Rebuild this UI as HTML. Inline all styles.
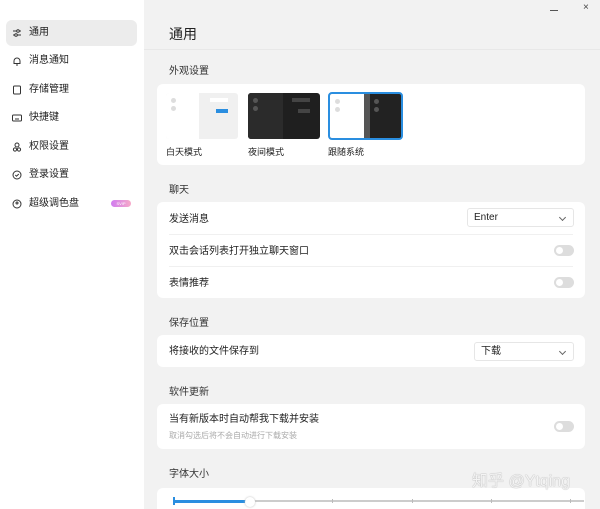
<!DOCTYPE html>
<html style="width:600px;height:509px;overflow:hidden"><head><meta charset="utf-8"><style>
*{box-sizing:border-box;margin:0;padding:0}
body{width:600px;height:509px;overflow:hidden;background:#f2f2f2;font-family:"Liberation Sans","Noto Sans CJK SC",sans-serif;color:#222;position:relative}
.abs{position:absolute}
#side{left:0;top:0;width:144px;height:509px;background:#fff}
.nav{position:absolute;left:6px;width:131px;height:26px;font-size:10px;line-height:26px;padding-left:23px;color:#222}
.nav svg{position:absolute;left:6px;top:8px}
.sel{background:#ececec;border-radius:6px}
.card{position:absolute;left:157px;width:428px;background:#fff;border-radius:6px;overflow:hidden}
.h{position:absolute;left:169px;font-size:10px;line-height:12px;color:#333}
.row{position:absolute;left:12px;font-size:10px;line-height:12px;color:#222}
.tog{position:absolute;right:11px;width:20px;height:11px;border-radius:6px;background:#ddd}
.tog:after{content:"";position:absolute;left:2px;top:2px;width:7px;height:7px;border-radius:50%;background:#fff}
.sel2{position:absolute;border:1px solid #e6e6e6;border-radius:3px;height:19px;font-size:10px;line-height:17px;padding-left:6px}
.sel2:after{content:"";position:absolute;right:8px;top:6px;width:4px;height:4px;border-right:1px solid #666;border-bottom:1px solid #666;transform:rotate(45deg)}
.sep{position:absolute;left:12px;right:12px;height:1px;background:#f0f0f0}
.tick{position:absolute;top:11px;width:1px;height:4px;background:#bbb}
</style></head><body>
<div id="side" class="abs">
 <div class="nav sel" style="top:20px"><svg width="10" height="10" viewBox="0 0 10 10" fill="none" stroke="#333" stroke-width="1"><path d="M1 3h8M1 7h8"/><circle cx="6" cy="3" r="1.3" fill="#fff"/><circle cx="4" cy="7" r="1.3" fill="#fff"/></svg>通用</div>
 <div class="nav" style="top:48px"><svg width="10" height="10" viewBox="0 0 10 10" fill="none" stroke="#333"><path d="M2 7.5V5a3 3 0 0 1 6 0v2.5H2zM4 9h2"/></svg>消息通知</div>
 <div class="nav" style="top:77px"><svg width="10" height="10" viewBox="0 0 10 10" fill="none" stroke="#333"><rect x="1.5" y="1" width="7" height="8" rx="1"/></svg>存储管理</div>
 <div class="nav" style="top:105px"><svg width="10" height="10" viewBox="0 0 10 10" fill="none" stroke="#333"><rect x="0.5" y="2" width="9" height="6" rx="1"/><path d="M3 6h4"/></svg>快捷键</div>
 <div class="nav" style="top:134px"><svg width="10" height="10" viewBox="0 0 10 10" fill="none" stroke="#333"><circle cx="5" cy="3" r="2"/><circle cx="3" cy="7.5" r="1.6"/><circle cx="7" cy="7.5" r="1.6"/></svg>权限设置</div>
 <div class="nav" style="top:162px"><svg width="10" height="10" viewBox="0 0 10 10" fill="none" stroke="#333"><circle cx="5" cy="5" r="4"/><path d="M3.3 5l1.2 1.2L6.8 4"/></svg>登录设置</div>
 <div class="nav" style="top:191px"><svg width="10" height="10" viewBox="0 0 10 10" fill="none" stroke="#333"><circle cx="5" cy="5" r="4"/><circle cx="5" cy="4" r="1"/></svg>超级调色盘<span style="position:absolute;left:105px;top:9px;width:20px;height:7px;border-radius:4px;background:linear-gradient(90deg,#d07cf0,#f7a9c8);font-size:4px;line-height:7px;color:#fff;text-align:center">SVIP</span></div>
</div>
<div class="abs" style="left:144px;top:49px;width:456px;height:1px;background:#e8e8e8"></div>
<div class="abs" style="left:550px;top:10px;width:8px;height:1px;background:#555"></div>
<div class="abs" style="left:583px;top:2px;font-size:10px;color:#444">×</div>
<div class="abs" style="left:169px;top:25px;font-size:14px;line-height:18px;color:#222">通用</div>

<div class="h" style="top:66px">外观设置</div>
<div class="card" style="top:84px;height:81px">
 <div class="abs" style="left:9px;top:9px;width:72px;height:46px;background:#f0f0f0;border-radius:3px;overflow:hidden"><div class="abs" style="left:0;top:0;width:33px;height:46px;background:#fff"></div><div class="abs" style="left:44px;top:5px;width:18px;height:4px;background:#fff"></div><div class="abs" style="left:50px;top:16px;width:12px;height:4px;background:#2a8ee0"></div><div class="abs" style="left:5px;top:5px;width:5px;height:5px;border-radius:50%;background:#ddd"></div><div class="abs" style="left:5px;top:13px;width:5px;height:5px;border-radius:50%;background:#ddd"></div></div>
 <div class="abs" style="left:91px;top:9px;width:72px;height:46px;background:#1f1f1f;border-radius:3px;overflow:hidden"><div class="abs" style="left:0;top:0;width:35px;height:46px;background:#2b2b2b"></div><div class="abs" style="left:44px;top:5px;width:18px;height:4px;background:#444"></div><div class="abs" style="left:50px;top:16px;width:12px;height:4px;background:#444"></div><div class="abs" style="left:5px;top:5px;width:5px;height:5px;border-radius:50%;background:#555"></div><div class="abs" style="left:5px;top:13px;width:5px;height:5px;border-radius:50%;background:#555"></div></div>
 <div class="abs" style="left:171px;top:8px;width:75px;height:48px;border:2px solid #2a8ee0;border-radius:4px;overflow:hidden;background:#222"><div class="abs" style="left:0;top:0;width:34px;height:46px;background:#fff"></div><div class="abs" style="left:34px;top:0;width:6px;height:46px;background:#555"></div><div class="abs" style="left:5px;top:5px;width:5px;height:5px;border-radius:50%;background:#ddd"></div><div class="abs" style="left:5px;top:13px;width:5px;height:5px;border-radius:50%;background:#ddd"></div><div class="abs" style="left:44px;top:5px;width:5px;height:5px;border-radius:50%;background:#555"></div><div class="abs" style="left:44px;top:13px;width:5px;height:5px;border-radius:50%;background:#555"></div></div>
 <div class="abs" style="left:9px;top:61px;font-size:9px">白天模式</div>
 <div class="abs" style="left:91px;top:61px;font-size:9px">夜间模式</div>
 <div class="abs" style="left:171px;top:61px;font-size:9px">跟随系统</div>
</div>

<div class="h" style="top:185px">聊天</div>
<div class="card" style="top:202px;height:96px">
 <div class="row" style="top:12px">发送消息</div>
 <div class="sel2" style="left:310px;top:6px;width:107px">Enter</div>
 <div class="sep" style="top:32px"></div>
 <div class="row" style="top:44px">双击会话列表打开独立聊天窗口</div>
 <div class="tog" style="top:43px"></div>
 <div class="sep" style="top:64px"></div>
 <div class="row" style="top:76px">表情推荐</div>
 <div class="tog" style="top:75px"></div>
</div>

<div class="h" style="top:318px">保存位置</div>
<div class="card" style="top:335px;height:32px">
 <div class="row" style="top:11px">将接收的文件保存到</div>
 <div class="sel2" style="left:317px;top:7px;width:100px">下载</div>
</div>

<div class="h" style="top:387px">软件更新</div>
<div class="card" style="top:404px;height:45px">
 <div class="row" style="top:10px">当有新版本时自动帮我下载并安装</div>
 <div class="row" style="top:27px;font-size:8px;line-height:10px;color:#aaa">取消勾选后将不会自动进行下载安装</div>
 <div class="tog" style="top:17px"></div>
</div>

<div class="h" style="top:469px">字体大小</div>
<div class="card" style="top:488px;height:21px;border-radius:6px 6px 0 0">
 <div class="abs" style="left:17px;top:12px;width:410px;height:2px;background:#ccc"></div>
 <div class="tick" style="left:175px"></div><div class="tick" style="left:255px"></div><div class="tick" style="left:334px"></div><div class="tick" style="left:413px"></div>
 <div class="abs" style="left:17px;top:12px;width:78px;height:3px;background:#2a8ee0"></div>
 <div class="abs" style="left:16px;top:9px;width:2px;height:8px;background:#2a8ee0"></div>
 <div class="abs" style="left:88px;top:9px;width:10px;height:10px;border-radius:50%;background:#fff;box-shadow:0 0 2px #bbb"></div>
</div>
<div class="abs" style="left:472px;top:472px;font-size:16px;line-height:20px;color:#f4f4f4;text-shadow:0 0 1px #888">知乎 @Ytqing</div>
</body></html>
